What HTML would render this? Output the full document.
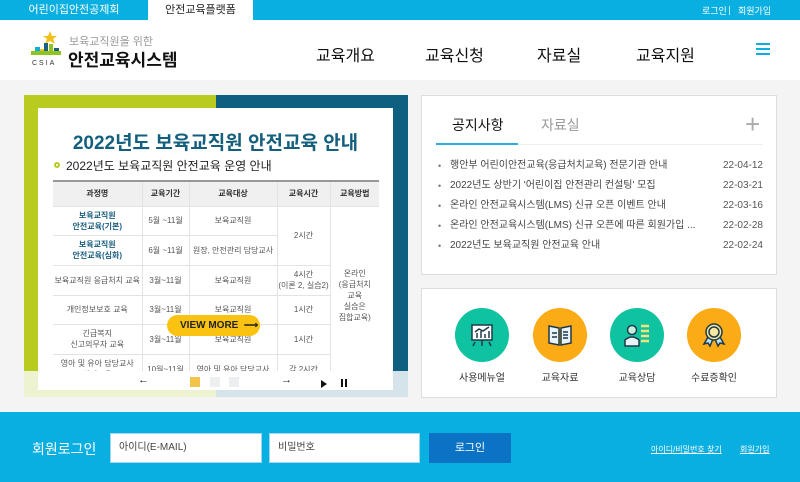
<!DOCTYPE html>
<html><head><meta charset="utf-8"><style>
*{margin:0;padding:0;box-sizing:border-box}
body{width:800px;height:482px;overflow:hidden;font-family:"Liberation Sans","Noto Sans CJK KR",sans-serif;background:#f4f4f4;position:relative;color:#222}
.abs{position:absolute}
.top{left:0;top:0;width:800px;height:20px;background:#0aafe2}
.tab1{left:0;top:0;width:148px;height:20px;color:#fff;font-size:11px;text-align:center;line-height:20px}
.tab2{left:148px;top:0;width:105px;height:20px;background:#fff;color:#222;font-size:11px;text-align:center;line-height:20px}
.head{left:0;top:20px;width:800px;height:60px;background:#fff}
.nav{font-size:16px;color:#111;top:42px}
.card{background:#fff;border:1px solid #ddd}
table{border-collapse:collapse;font-size:8px;color:#555;text-align:center}
td,th{border-bottom:1px solid #e3e3e3;border-right:1px solid #e3e3e3;padding:0}
th{background:#f0f0f0;font-weight:bold;color:#333;height:25px}
.blue{color:#1b5f82;font-weight:bold}
li{list-style:none;font-size:10px;color:#444;height:20px;line-height:20px;position:relative;padding-left:14px}
li:before{content:"•";position:absolute;left:2px;font-size:9px;color:#777}
li span{position:absolute;right:0;color:#555}
.ic{width:54px;height:54px;border-radius:50%;top:308px}
.lbl{top:369px;font-size:10px;color:#333;width:80px;text-align:center}
.bot{left:0;top:412px;width:800px;height:70px;background:#0aafe2}
.inp{background:#fff;border:1px solid #9fd6ea;height:30px;top:433px;font-size:10px;color:#444;line-height:28px;padding-left:8px}
</style></head><body>
<div class="abs top"></div>
<div class="abs tab1">어린이집안전공제회</div>
<div class="abs tab2">안전교육플랫폼</div>
<div class="abs" style="left:702px;top:4px;font-size:9px;color:#fff">로그인</div>
<div class="abs" style="left:729px;top:6px;width:1px;height:9px;background:#bfe8f6"></div>
<div class="abs" style="left:738px;top:4px;font-size:9px;color:#fff">회원가입</div>
<div class="abs head"></div>
<svg class="abs" style="left:30px;top:31px" width="32" height="36" viewBox="0 0 32 36">
<polygon points="20,0 22,5 27,5 23,8 25,13 20,10 15,13 17,8 13,5 18,5" fill="#f2c21a"/>
<rect x="14" y="12" width="4" height="12" fill="#1b5f82"/><rect x="19" y="13" width="4" height="11" fill="#8fc31f"/>
<rect x="5" y="16" width="5" height="8" fill="#0aafe2"/><rect x="24" y="17" width="5" height="7" fill="#1b5f82"/>
<rect x="10" y="18" width="4" height="6" fill="#f2c21a"/><rect x="1" y="20" width="30" height="4" fill="#8fc31f"/>
<text x="2" y="34" font-size="7" fill="#333" font-family="Liberation Sans" letter-spacing="2">CSIA</text></svg>
<div class="abs" style="left:69px;top:33px;font-size:11px;color:#999">보육교직원을 위한</div>
<div class="abs" style="left:68px;top:46px;font-size:17px;font-weight:bold;color:#111">안전교육시스템</div>
<div class="abs nav" style="left:316px">교육개요</div>
<div class="abs nav" style="left:425px">교육신청</div>
<div class="abs nav" style="left:537px">자료실</div>
<div class="abs nav" style="left:636px">교육지원</div>
<div class="abs" style="left:756px;top:43px;width:14px;height:2px;background:#0aafe2;box-shadow:0 5px 0 #0aafe2,0 10px 0 #0aafe2"></div>

<div class="abs" style="left:24px;top:95px;width:192px;height:302px;background:#b7cc1f"></div>
<div class="abs" style="left:216px;top:95px;width:192px;height:302px;background:#0f5f80"></div>
<div class="abs" style="left:24px;top:371px;width:192px;height:26px;background:#edf2d0"></div>
<div class="abs" style="left:216px;top:371px;width:192px;height:26px;background:#d5e3ea"></div>
<div class="abs" style="left:38px;top:108px;width:355px;height:282px;background:#fff;overflow:hidden">
<div style="position:absolute;left:0;width:355px;top:20px;text-align:center;font-size:19px;font-weight:bold;color:#135f7d">2022년도 보육교직원 안전교육 안내</div>
<div style="position:absolute;left:16px;top:54px;width:6px;height:6px;border:2px solid #b7cc1f;border-radius:50%"></div>
<div style="position:absolute;left:28px;top:49px;font-size:12px;color:#222">2022년도 보육교직원 안전교육 운영 안내</div>
<table style="position:absolute;left:15px;top:72px;width:326px;border-top:2px solid #999">
<tr><th style="width:89px">과정명</th><th style="width:47px">교육기간</th><th style="width:88px">교육대상</th><th style="width:53px">교육시간</th><th style="border-right:0">교육방법</th></tr>
<tr style="height:29px"><td class="blue">보육교직원<br>안전교육(기본)</td><td>5월 ~11월</td><td>보육교직원</td><td rowspan="2">2시간</td><td rowspan="6" style="border-right:0">온라인<br>(응급처치<br>교육<br>실습은<br>집합교육)</td></tr>
<tr style="height:30px"><td class="blue">보육교직원<br>안전교육(심화)</td><td>6월 ~11월</td><td>원장, 안전관리 담당교사</td></tr>
<tr style="height:30px"><td>보육교직원 응급처치 교육</td><td>3월~11월</td><td>보육교직원</td><td>4시간<br>(이론 2, 실습2)</td></tr>
<tr style="height:29px"><td>개인정보보호 교육</td><td>3월~11월</td><td>보육교직원</td><td>1시간</td></tr>
<tr style="height:30px"><td>긴급복지<br>신고의무자 교육</td><td>3월~11월</td><td>보육교직원</td><td>1시간</td></tr>
<tr style="height:30px"><td>영아 및 유아 담당교사<br>안전교육</td><td>10월~11월</td><td>영아 및 유아 담당교사</td><td>각 2시간</td></tr>
</table>
<div style="position:absolute;left:129px;top:207px;width:93px;height:21px;border-radius:11px;background:#fbc311;font-size:10px;font-weight:bold;color:#222;line-height:21px;padding-left:13px">VIEW MORE &nbsp;⟶</div>
<div style="position:absolute;left:0;top:263px;width:355px;height:19px;background:#fff"></div>
<div style="position:absolute;left:100px;top:266px;font-size:11px">←</div>
<div style="position:absolute;left:152px;top:269px;width:10px;height:10px;background:#f2c44a"></div>
<div style="position:absolute;left:172px;top:269px;width:10px;height:10px;background:#eceef0"></div>
<div style="position:absolute;left:191px;top:269px;width:10px;height:10px;background:#eceef0"></div>
<div style="position:absolute;left:243px;top:266px;font-size:11px">→</div>
<div style="position:absolute;left:283px;top:272px;border-left:6px solid #111;border-top:4px solid transparent;border-bottom:4px solid transparent"></div>
<div style="position:absolute;left:303px;top:271px;width:2px;height:8px;background:#111;box-shadow:4px 0 0 #111"></div>
</div>

<div class="abs card" style="left:421px;top:95px;width:356px;height:180px"></div>
<div class="abs" style="left:452px;top:115px;font-size:14px;color:#111">공지사항</div>
<div class="abs" style="left:541px;top:115px;font-size:14px;color:#999">자료실</div>
<div class="abs" style="left:745px;top:114px;font-size:26px;color:#aaa;line-height:20px;font-weight:200">+</div>
<div class="abs" style="left:436px;top:144px;width:327px;height:1px;background:#eee"></div>
<div class="abs" style="left:436px;top:143px;width:82px;height:2px;background:#2aaee0"></div>
<ul class="abs" style="left:436px;top:156px;width:327px">
<li>행안부 어린이안전교육(응급처치교육) 전문기관 안내<span>22-04-12</span></li>
<li>2022년도 상반기 '어린이집 안전관리 컨설팅' 모집<span>22-03-21</span></li>
<li>온라인 안전교육시스템(LMS) 신규 오픈 이벤트 안내<span>22-03-16</span></li>
<li>온라인 안전교육시스템(LMS) 신규 오픈에 따른 회원가입 ...<span>22-02-28</span></li>
<li>2022년도 보육교직원 안전교육 안내<span>22-02-24</span></li>
</ul>

<div class="abs card" style="left:421px;top:288px;width:356px;height:110px"></div>
<div class="abs ic" style="left:455px;background:#0fc2a0"></div>
<div class="abs ic" style="left:533px;background:#fbab15"></div>
<div class="abs ic" style="left:610px;background:#0fc2a0"></div>
<div class="abs ic" style="left:687px;background:#fbab15"></div>
<svg class="abs" style="left:470px;top:323px" width="24" height="24" viewBox="0 0 24 24" fill="none" stroke="#1e3a4a" stroke-width="1.5"><rect x="2" y="2" width="20" height="15" fill="#fff"/><path d="M7 15v-5M11 15v-7M15 15v-4M19 15V8M5 19l-2 4M19 19l2 4M12 17v6M5 9l4-3 4 2 6-4"/></svg>
<svg class="abs" style="left:548px;top:324px" width="24" height="22" viewBox="0 0 24 22" stroke="#1e3a4a" stroke-width="1.5"><path d="M1 2l10 2v17L1 19z" fill="#e9f3f8"/><path d="M23 2l-10 2v17l10-2z" fill="#e9f3f8"/><path d="M4 9h5M4 13h5M15 8h5M15 11h5M15 14h5" fill="none"/></svg>
<svg class="abs" style="left:624px;top:323px" width="26" height="24" viewBox="0 0 26 24" stroke="#1e3a4a" stroke-width="1.5"><circle cx="8" cy="7" r="4.5" fill="#c7eee0"/><path d="M1 23v-6q7-6 14 0v6z" fill="#e9f3f8"/><path d="M17 3h8M17 8h8M17 13h8M17 18h8" stroke="#f6e27d" stroke-width="2.5"/></svg>
<svg class="abs" style="left:702px;top:322px" width="24" height="26" viewBox="0 0 24 26" stroke="#1e3a4a" stroke-width="1.5"><path d="M6 15l-4 7 4-1 2 3 3-7M18 15l4 7-4-1-2 3-3-7" fill="#bde3ee"/><circle cx="12" cy="10" r="8" fill="#f7e7a0"/><circle cx="12" cy="10" r="5" fill="none"/></svg>
<div class="abs lbl" style="left:442px">사용메뉴얼</div>
<div class="abs lbl" style="left:520px">교육자료</div>
<div class="abs lbl" style="left:597px">교육상담</div>
<div class="abs lbl" style="left:674px">수료증확인</div>

<div class="abs bot"></div>
<div class="abs" style="left:32px;top:439px;font-size:14px;color:#fff">회원로그인</div>
<div class="abs inp" style="left:110px;width:152px">아이디(E-MAIL)</div>
<div class="abs inp" style="left:269px;width:151px">비밀번호</div>
<div class="abs" style="left:429px;top:433px;width:82px;height:30px;background:#0b72c4;color:#fff;font-size:11px;text-align:center;line-height:30px">로그인</div>
<div class="abs" style="left:651px;top:444px;font-size:8px;color:#fff;text-decoration:underline">아이디/비밀번호 찾기</div>
<div class="abs" style="left:740px;top:444px;font-size:8px;color:#fff;text-decoration:underline">회원가입</div>
</body></html>
